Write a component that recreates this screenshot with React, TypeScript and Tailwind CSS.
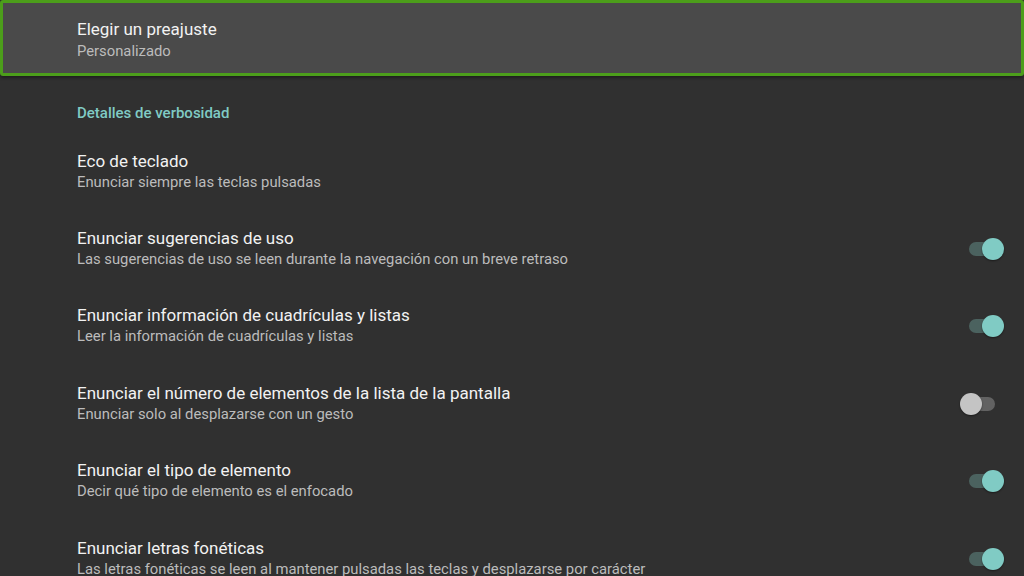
import React from 'react';

type Item = { title: string; summary: string; toggle?: boolean };

const items: Item[] = [
  { title: 'Eco de teclado', summary: 'Enunciar siempre las teclas pulsadas' },
  {
    title: 'Enunciar sugerencias de uso',
    summary: 'Las sugerencias de uso se leen durante la navegación con un breve retraso',
    toggle: true,
  },
  {
    title: 'Enunciar información de cuadrículas y listas',
    summary: 'Leer la información de cuadrículas y listas',
    toggle: true,
  },
  {
    title: 'Enunciar el número de elementos de la lista de la pantalla',
    summary: 'Enunciar solo al desplazarse con un gesto',
    toggle: false,
  },
  {
    title: 'Enunciar el tipo de elemento',
    summary: 'Decir qué tipo de elemento es el enfocado',
    toggle: true,
  },
  {
    title: 'Enunciar letras fonéticas',
    summary: 'Las letras fonéticas se leen al mantener pulsadas las teclas y desplazarse por carácter',
    toggle: true,
  },
];

function Switch({ on }: { on: boolean }) {
  return (
    <div className="relative h-[22px] w-[44px] shrink-0">
      <div
        className={
          on
            ? 'absolute left-[8px] top-[4px] h-[14px] w-[34px] rounded-full bg-[#4b625f]'
            : 'absolute left-[4px] top-[4px] h-[14px] w-[30px] rounded-full bg-[#626262]'
        }
      />
      <div
        className={
          on
            ? 'absolute left-[21px] top-0 h-[22px] w-[22px] rounded-full bg-[#80cbc4] shadow-[0_1px_2px_rgba(0,0,0,0.45)]'
            : 'absolute -left-[1px] top-0 h-[22px] w-[22px] rounded-full bg-[#c4c4c4] shadow-[0_1px_2px_rgba(0,0,0,0.45)]'
        }
      />
    </div>
  );
}

function Row({ item }: { item: Item }) {
  return (
    <div className="flex h-[77.4px] items-center pl-[77px] pr-[19px]">
      <div className="min-w-0 flex-1">
        <p className="text-[17px] leading-[21px] text-[#f2f2f2]">{item.title}</p>
        <p className="text-[14.8px] leading-[21px] text-[#bcbcbc] whitespace-nowrap">{item.summary}</p>
      </div>
      {item.toggle !== undefined && <Switch on={item.toggle} />}
    </div>
  );
}

export default function App() {
  return (
    <div
      className="h-[576px] w-[1024px] overflow-hidden bg-[#303030]"
      style={{ fontFamily: 'Roboto, "Noto Sans", sans-serif' }}
    >
      <div className="h-[76px] rounded-[3px] border-[3px] border-[#4c9e1b] bg-[#4a4a4a] pl-[74px] pt-[15px] shadow-[0_2px_3px_rgba(0,0,0,0.35)]">
        <p className="text-[17px] leading-[22px] text-[#f2f2f2]">Elegir un preajuste</p>
        <p className="text-[14.8px] leading-[22px] text-[#bcbcbc]">Personalizado</p>
      </div>
      <div className="pl-[77px] pt-[27px] pb-[10px]">
        <p className="text-[15px] font-medium leading-[20px] text-[#80cbc4]">Detalles de verbosidad</p>
      </div>
      {items.map((it) => (
        <Row key={it.title} item={it} />
      ))}
    </div>
  );
}
